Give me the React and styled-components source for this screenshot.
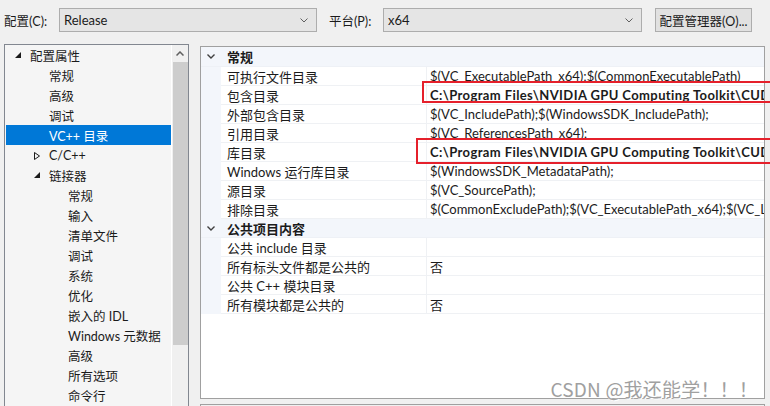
import { createGlobalStyle } from "styled-components";
import styled from "styled-components";

const GlobalStyle = createGlobalStyle`
  html, body {
    margin: 0;
    padding: 0;
    background: #f0f0f0;
  }
  * { box-sizing: border-box; }
`;

const Page = styled.div`
  position: relative;
  width: 770px;
  height: 406px;
  overflow: hidden;
  background: #f0f0f0;
  font-family: "Lato", "Noto Sans CJK SC", sans-serif;
  font-size: 12px;
  color: #1b1b1b;
  display: flex;
  flex-direction: column;
`;

const TopBar = styled.div`
  flex: none;
  display: flex;
  align-items: center;
  height: 40px;
  padding: 0 0 0 4px;
`;

const Label = styled.span`
  width: ${({ w }) => w}px;
  white-space: nowrap;
  font-size: 12.5px;
`;

const Select = styled.div`
  width: ${({ w }) => w}px;
  height: 24px;
  margin-right: ${({ mr }) => mr}px;
  display: flex;
  align-items: center;
  justify-content: space-between;
  padding: 0 8px 0 4px;
  background: #e5e5e5;
  border: 1px solid #adadad;
  font-size: 13px;
`;

const Chevron = ({ size = 8, color = "#606060", dir = "down", sw = 1 }) => (
  <svg width={size} height={size / 2 + 1} viewBox="0 0 8 5">
    <polyline
      points={dir === "down" ? "0.5,0.5 4,4 7.5,0.5" : "0.5,4.5 4,1 7.5,4.5"}
      fill="none"
      stroke={color}
      strokeWidth={sw}
    />
  </svg>
);

const Button = styled.div`
  width: 97px;
  height: 24px;
  display: flex;
  align-items: center;
  justify-content: center;
  background: #e1e1e1;
  border: 1px solid #adadad;
  font-size: 12.5px;
`;

const Main = styled.div`
  display: flex;
  flex: 1;
  min-height: 0;
  padding-left: 4px;
  margin-top: 4px;
`;

const TreePanel = styled.div`
  width: 185px;
  height: 380px;
  flex: none;
  display: flex;
  background: #f5f5f5;
  border: 1px solid #828790;
`;

const TreeList = styled.div`
  flex: 1;
  padding: 0 0 0 1px;
  font-size: 12.5px;
`;

const TreeRow = styled.div`
  height: 20px;
  display: flex;
  align-items: center;
  position: relative;
  padding-left: ${({ level }) => 24 + level * 19}px;
  background: ${({ selected }) => (selected ? "#0078d7" : "transparent")};
  color: ${({ selected }) => (selected ? "#fff" : "#1b1b1b")};
  white-space: nowrap;
`;

const Toggle = styled.span`
  position: absolute;
  left: ${({ level }) => 9 + level * 19}px;
  top: 7px;
  display: flex;
`;

const Scrollbar = styled.div`
  width: 17px;
  border-left: 1px solid #ffffff;
  background: #f0f0f0;
  display: flex;
  flex-direction: column;
  align-items: center;
`;

const ScrollArrow = styled.div`
  height: 17px;
  display: flex;
  align-items: center;
  justify-content: center;
`;

const ScrollThumb = styled.div`
  width: 15px;
  height: 283px;
  background: #cdcdcd;
`;

const RightCol = styled.div`
  margin-left: 11px;
  margin-top: 2px;
  display: flex;
  flex-direction: column;
  gap: 5px;
`;

const Grid = styled.div`
  width: 565px;
  height: 353px;
  flex: none;
  background: #ffffff;
  border: 1px solid #a0a0a0;
  font-size: 13px;
  overflow: hidden;
`;

const CategoryRow = styled.div`
  height: ${({ h }) => h}px;
  display: flex;
  align-items: center;
  background: #f3f6fb;
  font-weight: bold;
  border-bottom: 1px solid #eef1f6;
`;

const Gutter = styled.div`
  width: 20px;
  flex: none;
  height: 100%;
  display: flex;
  align-items: center;
  justify-content: center;
  background: #f3f6fb;
`;

const CategoryTitle = styled.span`
  padding-left: 6px;
`;

const PropRow = styled.div`
  height: 19px;
  display: flex;
  align-items: stretch;
`;

const NameCell = styled.div`
  width: 206px;
  flex: none;
  padding-left: 6px;
  display: flex;
  align-items: center;
  border-bottom: 1px solid #eff1f4;
  border-right: 1px solid #eff1f4;
  white-space: nowrap;
`;

const ValueCell = styled.div`
  flex: 1;
  padding-left: 3px;
  display: flex;
  align-items: center;
  border-bottom: 1px solid #eff1f4;
  white-space: nowrap;
  overflow: hidden;
  font-weight: ${({ bold }) => (bold ? "bold" : "normal")};
  letter-spacing: ${({ bold }) => (bold ? "0.4px" : "0")};
`;

const DescPanel = styled.div`
  width: 565px;
  height: 30px;
  flex: none;
  border: 1px solid #a0a0a0;
  background: #f0f0f0;
`;

const RedBox = styled.div`
  position: absolute;
  left: ${({ x }) => x}px;
  top: ${({ y }) => y}px;
  width: ${({ w }) => w}px;
  height: ${({ h }) => h}px;
  border: 2px solid #e5202b;
`;

const Watermark = styled.div`
  position: absolute;
  right: 12px;
  bottom: 4px;
  font-family: "Noto Sans CJK SC", sans-serif;
  font-size: 19px;
  color: #a0a0a0;
  text-shadow: 0 0 1px #fff, 1px 1px 0 #fff;
  letter-spacing: 0.2px;
`;

const Expanded = () => (
  <svg width="6" height="6" viewBox="0 0 6 6">
    <polygon points="6,0 6,6 0,6" fill="#1b1b1b" />
  </svg>
);

const Collapsed = () => (
  <svg width="6" height="8" viewBox="0 0 6 8">
    <polygon points="0.5,0.5 5.5,4 0.5,7.5" fill="none" stroke="#1b1b1b" strokeWidth="1" />
  </svg>
);

const tree = [
  { label: "配置属性", level: 0, toggle: "open" },
  { label: "常规", level: 1 },
  { label: "高级", level: 1 },
  { label: "调试", level: 1 },
  { label: "VC++ 目录", level: 1, selected: true },
  { label: "C/C++", level: 1, toggle: "closed" },
  { label: "链接器", level: 1, toggle: "open" },
  { label: "常规", level: 2 },
  { label: "输入", level: 2 },
  { label: "清单文件", level: 2 },
  { label: "调试", level: 2 },
  { label: "系统", level: 2 },
  { label: "优化", level: 2 },
  { label: "嵌入的 IDL", level: 2 },
  { label: "Windows 元数据", level: 2 },
  { label: "高级", level: 2 },
  { label: "所有选项", level: 2 },
  { label: "命令行", level: 2 },
];

const general = [
  ["可执行文件目录", "$(VC_ExecutablePath_x64);$(CommonExecutablePath)"],
  ["包含目录", "C:\\Program Files\\NVIDIA GPU Computing Toolkit\\CUDA\\v11.6\\include", true],
  ["外部包含目录", "$(VC_IncludePath);$(WindowsSDK_IncludePath);"],
  ["引用目录", "$(VC_ReferencesPath_x64);"],
  ["库目录", "C:\\Program Files\\NVIDIA GPU Computing Toolkit\\CUDA\\v11.6\\lib\\x64", true],
  ["Windows 运行库目录", "$(WindowsSDK_MetadataPath);"],
  ["源目录", "$(VC_SourcePath);"],
  ["排除目录", "$(CommonExcludePath);$(VC_ExecutablePath_x64);$(VC_LibraryPath_x64)"],
];

const shared = [
  ["公共 include 目录", ""],
  ["所有标头文件都是公共的", "否"],
  ["公共 C++ 模块目录", ""],
  ["所有模块都是公共的", "否"],
];

const Category = ({ title, h }) => (
  <CategoryRow h={h}>
    <Gutter>
      <Chevron size={8} color="#404040" sw={1.4} />
    </Gutter>
    <CategoryTitle>{title}</CategoryTitle>
  </CategoryRow>
);

const Props = ({ rows }) =>
  rows.map(([name, value, bold], i) => (
    <PropRow key={i}>
      <Gutter />
      <NameCell>{name}</NameCell>
      <ValueCell bold={bold}>{value}</ValueCell>
    </PropRow>
  ));

export default function App() {
  return (
    <Page>
      <GlobalStyle />
      <TopBar>
        <Label w={55}>配置(C):</Label>
        <Select w={258} mr={12}>
          <span>Release</span>
          <Chevron />
        </Select>
        <Label w={54}>平台(P):</Label>
        <Select w={259} mr={13}>
          <span>x64</span>
          <Chevron />
        </Select>
        <Button>配置管理器(O)...</Button>
      </TopBar>

      <Main>
        <TreePanel>
          <TreeList>
            {tree.map((item, i) => (
              <TreeRow key={i} level={item.level} selected={item.selected}>
                {item.toggle && (
                  <Toggle level={item.level}>
                    {item.toggle === "open" ? <Expanded /> : <Collapsed />}
                  </Toggle>
                )}
                {item.label}
              </TreeRow>
            ))}
          </TreeList>
          <Scrollbar>
            <ScrollArrow>
              <Chevron size={8} dir="up" color="#606060" sw={1.5} />
            </ScrollArrow>
            <ScrollThumb />
          </Scrollbar>
        </TreePanel>

        <RightCol>
          <Grid>
            <Category title="常规" h={20} />
            <Props rows={general} />
            <Category title="公共项目内容" h={19} />
            <Props rows={shared} />
          </Grid>
          <DescPanel />
        </RightCol>
      </Main>

      <RedBox x={422} y={81} w={350} h={22} />
      <RedBox x={416} y={138} w={356} h={26} />
      <Watermark>CSDN @我还能学！！！</Watermark>
    </Page>
  );
}
